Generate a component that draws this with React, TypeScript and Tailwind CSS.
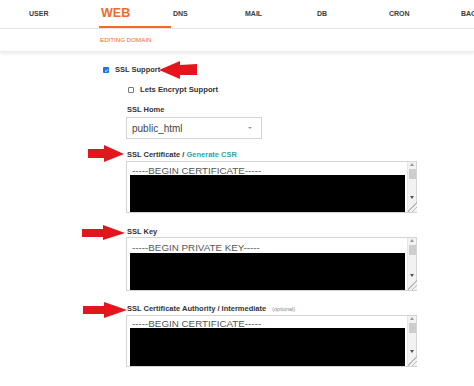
const tabs = ["USER", "WEB", "DNS", "MAIL", "DB", "CRON", "BACKUP"];

function Scrollbar() {
  return (
    <div className="flex w-[9px] flex-col items-center border-l border-[#e6e6e6] bg-[#f2f2f2]">
      <div className="mt-[1px] h-0 w-0 border-x-[2px] border-b-[3px] border-x-transparent border-b-[#999]" />
      <div className="mt-[3px] h-[10px] w-[7px] bg-[#cdcdcd]" />
      <div className="flex-1" />
      <div className="h-0 w-0 border-x-[2px] border-t-[3px] border-x-transparent border-t-[#555]" />
      <div className="mt-[3px] h-[10px] w-[9px] bg-[linear-gradient(135deg,#f2f2f2_45%,#bbb_45%,#bbb_55%,#f2f2f2_55%,#f2f2f2_70%,#bbb_70%,#bbb_78%,#f2f2f2_78%)]" />
    </div>
  );
}

function CertBox({ text, textTop, blackTop, h }: { text: string; textTop: string; blackTop: string; h: string }) {
  return (
    <div className={`flex w-[291px] border border-[#d4d4d4] bg-white font-normal ${h}`}>
      <div className="relative flex-1 overflow-hidden">
        <div className={`absolute left-[5px] text-[9.8px] leading-none text-[#555] ${textTop}`}>{text}</div>
        <div className={`absolute left-[3px] right-[2px] bottom-0 bg-black ${blackTop}`} />
      </div>
      <Scrollbar />
    </div>
  );
}

export default function App() {
  return (
    <div className="relative h-[386px] w-[474px] overflow-hidden bg-white font-['Liberation_Sans',Arial,sans-serif] text-[#333]">
      <div className="border-b border-[#ececec] shadow-[0_2px_3px_rgba(0,0,0,0.08)]">
        <div className="flex h-[29px] border-b border-[#e4e4e4] pl-[27px]">
          {tabs.map((t) => (
            <div
              key={t}
              className={`flex w-[72px] shrink-0 items-center pl-[2px] ${
                t === "WEB" ? "border-b-2 border-[#f26a2b] pt-[1px] text-[12.5px] font-bold text-[#f26a2b]" : "text-[7px] font-bold text-[#3a3a3a]"
              }`}
            >
              {t}
            </div>
          ))}
        </div>
        <div className="flex h-[22px] items-center pl-[100px] text-[6.2px] uppercase text-[#f26a2b]">Editing Domain</div>
      </div>

      <div className="flex flex-col pl-[126px] text-[7.5px] font-bold text-[#333]">
        <div className="-ml-[23px] mt-[12px] flex h-[12px] items-center gap-[6px]">
          <span className="flex h-[6px] w-[6px] items-center justify-center rounded-[1px] bg-[#1a73e8]">
            <svg viewBox="0 0 10 10" className="h-[5px] w-[5px]">
              <path d="M2 5.2 L4.2 7.3 L8 2.8" fill="none" stroke="white" strokeWidth="1.8" />
            </svg>
          </span>
          <span>SSL Support</span>
        </div>
        <div className="ml-[2px] mt-[8px] flex h-[12px] items-center gap-[6px] text-[7.7px]">
          <span className="h-[6px] w-[6px] rounded-[1px] border border-[#777] bg-white" />
          <span>Lets Encrypt Support</span>
        </div>
        <div className="ml-[1px] mt-[9px] flex h-[10px] items-center">SSL Home</div>
        <div className="mt-[2px] flex h-[22px] w-[136px] items-center justify-between border border-[#d4d4d4] pl-[5px] pr-[9px] text-[10px] font-normal text-[#444]">
          <span>public_html</span>
          <span className="h-0 w-0 border-x-[2px] border-t-[2px] border-x-transparent border-t-[#999]" />
        </div>
        <div className="ml-[1px] mt-[11px] flex h-[10px] items-center">
          SSL Certificate /&nbsp;<span className="text-[#35a0a8]">Generate CSR</span>
        </div>
        <div className="mt-[1px]">
          <CertBox text="-----BEGIN CERTIFICATE-----" textTop="top-[4px]" blackTop="top-[13px]" h="h-[52px]" />
        </div>
        <div className="ml-[1px] mt-[14px] flex h-[10px] items-center">SSL Key</div>
        <div>
          <CertBox text="-----BEGIN PRIVATE KEY-----" textTop="top-[5px]" blackTop="top-[15px]" h="h-[54px]" />
        </div>
        <div className="ml-[1px] mt-[13px] flex h-[10px] items-center">
          SSL Certificate Authority / Intermediate
          <span className="ml-[6px] text-[5.5px] font-normal text-[#888]">(optional)</span>
        </div>
        <div className="mt-[1px]">
          <CertBox text="-----BEGIN CERTIFICATE-----" textTop="top-[3px]" blackTop="top-[12px]" h="h-[52px]" />
        </div>
      </div>

      <svg className="pointer-events-none absolute left-0 top-0" width="474" height="386" viewBox="0 0 474 386">
        <g fill="#e3161e">
          <polygon points="159,70 180,61 180,65 197,64 197,75 180,75 180,79" />
          <polygon points="88,149 104,149 104,145 124,154 104,162 104,158 88,158" />
          <polygon points="82,229 103,229 103,225 125,233 103,240 103,237 82,237" />
          <polygon points="83,306 104,306 104,302 127,310 104,318 104,314 83,314" />
        </g>
      </svg>
    </div>
  );
}
